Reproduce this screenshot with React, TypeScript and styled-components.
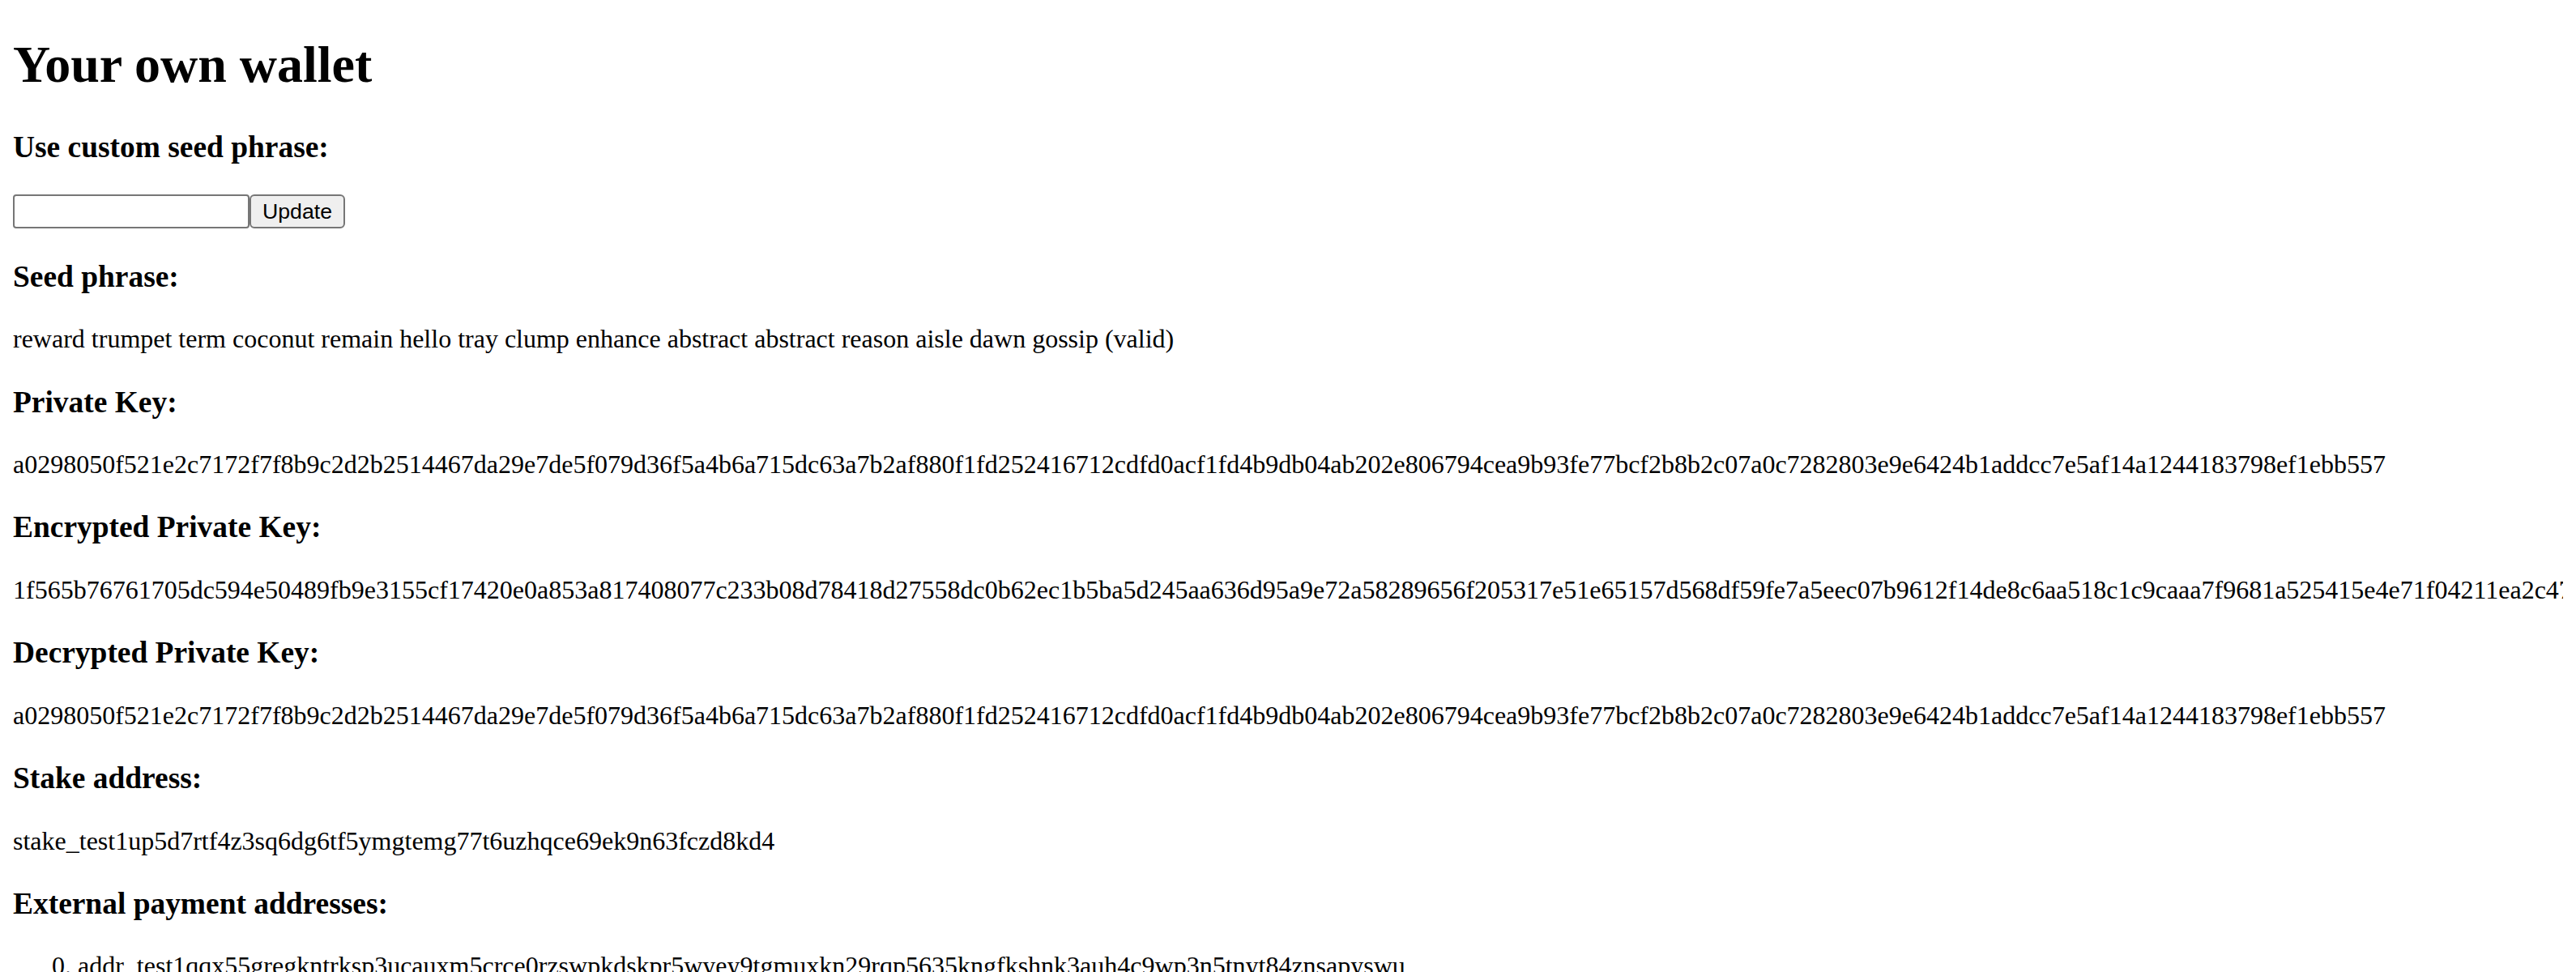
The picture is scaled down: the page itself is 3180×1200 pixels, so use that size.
import React, { useState } from 'react'
import styled, { createGlobalStyle } from 'styled-components'

const GlobalStyle = createGlobalStyle`
  html {
    zoom: 2;
  }
  body {
    margin: 0 8px 8px;
    background: #fff;
    color: #000;
    font-family: "Liberation Serif", "Times New Roman", serif;
  }
`

const Page = styled.div`
  white-space: nowrap;
`

const Title = styled.h1`
  font-size: 32px;
  font-weight: 700;
  margin: 21.44px 0;
`

const SectionTitle = styled.h3`
  font-size: 18.72px;
  font-weight: 700;
  margin: 18.72px 0;
`

const Value = styled.p`
  font-size: 16px;
  margin: 16px 0;
`

const SeedForm = styled.div`
  display: flex;
  align-items: center;
`

const SeedInput = styled.input`
  box-sizing: border-box;
  width: 146px;
  height: 21px;
  padding: 1px 2px;
  border: 1px solid #767676;
  border-radius: 2px;
  background: #fff;
  font-family: "Liberation Sans", Arial, sans-serif;
  font-size: 13.33px;
`

const UpdateButton = styled.button`
  box-sizing: border-box;
  height: 21px;
  padding: 1px 7px;
  border: 1px solid #767676;
  border-radius: 3px;
  background: #efefef;
  color: #000;
  font-family: "Liberation Sans", Arial, sans-serif;
  font-size: 13.33px;
`

const AddressList = styled.ol`
  font-size: 16px;
  margin: 16px 0;
  padding-left: 40px;
`

const seedPhrase =
  'reward trumpet term coconut remain hello tray clump enhance abstract abstract reason aisle dawn gossip'

const privateKey =
  'a0298050f521e2c7172f7f8b9c2d2b2514467da29e7de5f079d36f5a4b6a715dc63a7b2af880f1fd252416712cdfd0acf1fd4b9db04ab202e806794cea9b93fe77bcf2b8b2c07a0c7282803e9e6424b1addcc7e5af14a1244183798ef1ebb557'

const encryptedKey =
  '1f565b76761705dc594e50489fb9e3155cf17420e0a853a817408077c233b08d78418d27558dc0b62ec1b5ba5d245aa636d95a9e72a58289656f205317e51e65157d568df59fe7a5eec07b9612f14de8c6aa518c1c9caaa7f9681a525415e4e71f04211ea2c475b1e0d93a6f28c04e7d5b9a31f6c2e8d407ab5913c6e2f0a8d4b7e9c1f35a06'

const stakeAddress = 'stake_test1up5d7rtf4z3sq6dg6tf5ymgtemg77t6uzhqce69ek9n63fczd8kd4'

const externalAddresses = [
  'addr_test1qqx55gregkntrksp3ucauxm5crce0rzswpkdskpr5wyey9tgmuxkn29rqp5635kngfkshnk3auh4c9wp3n5tnyt84znsapyswu',
  'addr_test1qr8lq2h7mwa0v6cxvdn8ar0z3k4tzl6yq9wd2c8wj5f9ysgmuxkn29rqp5635kngfkshnk3auh4c9wp3n5tnyt84znsd3kq2e',
]

const App = () => {
  const [custom, setCustom] = useState('')

  return (
    <Page>
      <GlobalStyle />
      <Title>Your own wallet</Title>

      <SectionTitle>Use custom seed phrase:</SectionTitle>
      <SeedForm>
        <SeedInput value={custom} onChange={(e) => setCustom(e.target.value)} />
        <UpdateButton type="button">Update</UpdateButton>
      </SeedForm>

      <SectionTitle>Seed phrase:</SectionTitle>
      <Value>{seedPhrase} (valid)</Value>

      <SectionTitle>Private Key:</SectionTitle>
      <Value>{privateKey}</Value>

      <SectionTitle>Encrypted Private Key:</SectionTitle>
      <Value>{encryptedKey}</Value>

      <SectionTitle>Decrypted Private Key:</SectionTitle>
      <Value>{privateKey}</Value>

      <SectionTitle>Stake address:</SectionTitle>
      <Value>{stakeAddress}</Value>

      <SectionTitle>External payment addresses:</SectionTitle>
      <AddressList start={0}>
        {externalAddresses.map((addr) => (
          <li key={addr}>{addr}</li>
        ))}
      </AddressList>
    </Page>
  )
}

export default App
